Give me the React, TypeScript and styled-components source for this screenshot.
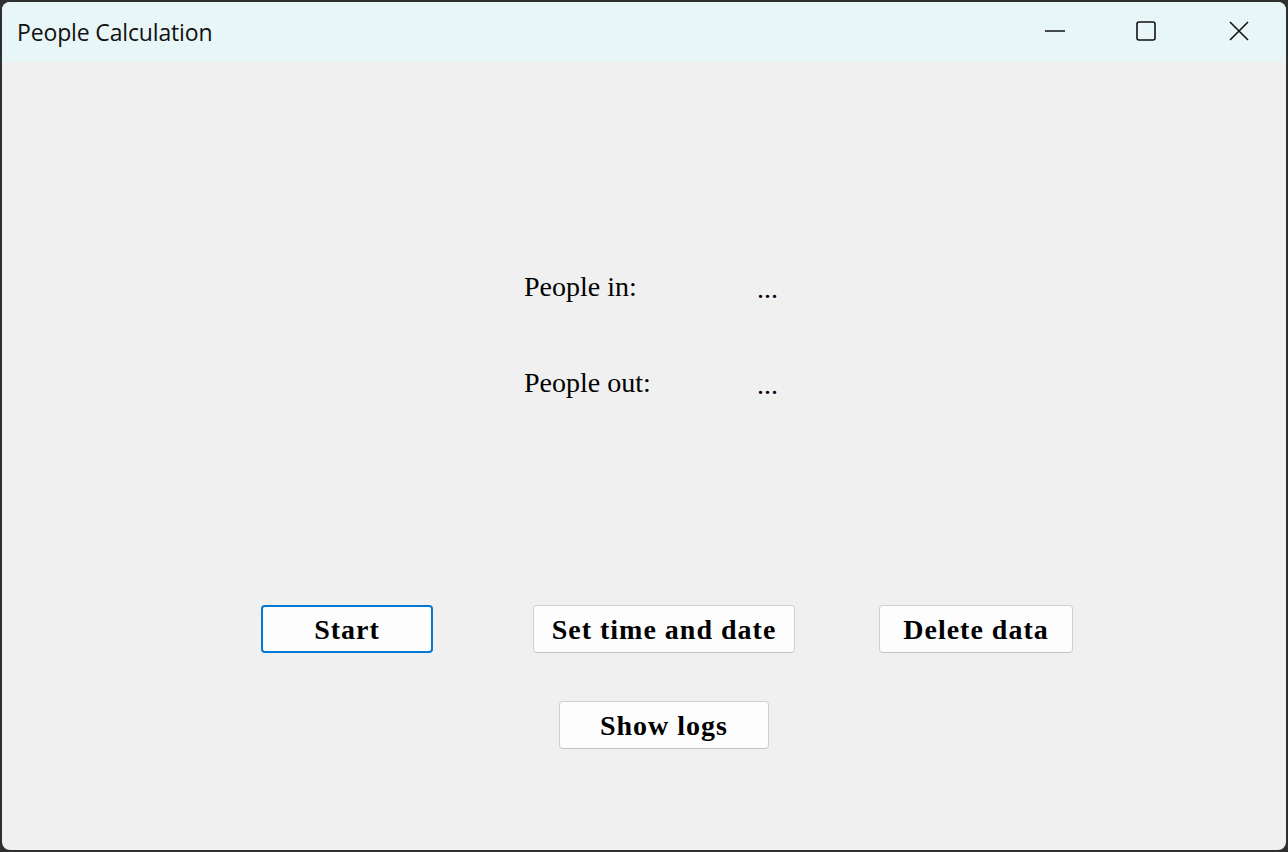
import React from "react";
import styled, { createGlobalStyle } from "styled-components";

const Global = createGlobalStyle`
  html, body { margin: 0; padding: 0; background: #2f2f2f; }
  #root { width: 1288px; height: 852px; }
`;

const Frame = styled.div`
  width: 1288px;
  height: 852px;
  box-sizing: border-box;
  padding: 2px;
  background: #2f2f2f;
`;

const Window = styled.div`
  width: 100%;
  height: 100%;
  border-radius: 8px;
  overflow: hidden;
  background: #f0f0f0;
  display: flex;
  flex-direction: column;
`;

const TitleBar = styled.div`
  height: 60px;
  flex: none;
  background: #e9f6f8;
  display: flex;
  align-items: center;
  padding-left: 15px;
`;

const Title = styled.div`
  font-family: "Open Sans", "Noto Sans", sans-serif;
  font-size: 23px;
  letter-spacing: -0.15px;
  color: #111;
  flex: 1;
`;

const Controls = styled.div`
  display: flex;
  height: 100%;
`;

const ControlButton = styled.div<{ $w: number }>`
  width: ${(p) => p.$w}px;
  height: 100%;
  display: flex;
  align-items: center;
  justify-content: center;
  padding-bottom: 2px;
  box-sizing: border-box;
`;

const Content = styled.div`
  flex: 1;
  display: flex;
  flex-direction: column;
`;

const Readouts = styled.div`
  margin-top: 209px;
  margin-left: 522px;
  display: grid;
  grid-template-columns: 233px auto;
  row-gap: 62px;
  font-family: "Liberation Serif", "Times New Roman", serif;
  font-size: 28px;
  line-height: 32px;
  color: #000;
`;

const Label = styled.div``;

const Value = styled.div`
  margin-top: 2px;
`;

const ButtonRow = styled.div<{ $top: number; $left: number }>`
  display: flex;
  margin-top: ${(p) => p.$top}px;
  padding-left: ${(p) => p.$left}px;
`;

const Button = styled.button<{ $w: number; $gap?: number; $focused?: boolean }>`
  width: ${(p) => p.$w}px;
  height: 48px;
  margin-left: ${(p) => p.$gap ?? 0}px;
  box-sizing: border-box;
  background: #fdfdfd;
  border: ${(p) => (p.$focused ? "2px solid #0078d4" : "1px solid #cfcfcf")};
  border-bottom-color: ${(p) => (p.$focused ? "#0078d4" : "#c2c2c2")};
  border-radius: 4px;
  font-family: "Liberation Serif", "Times New Roman", serif;
  font-weight: bold;
  font-size: 28px;
  letter-spacing: 1px;
  color: #000;
  padding: 2px 0 0 0;
  display: flex;
  align-items: center;
  justify-content: center;
`;

const Icon = ({ kind }: { kind: "min" | "max" | "close" }) => {
  if (kind === "min")
    return (
      <svg width="22" height="22" viewBox="0 0 22 22">
        <line x1="1" y1="11" x2="21" y2="11" stroke="#111" strokeWidth="1.6" />
      </svg>
    );
  if (kind === "max")
    return (
      <svg width="22" height="22" viewBox="0 0 22 22">
        <rect x="2" y="2" width="18" height="18" rx="2" fill="none" stroke="#111" strokeWidth="1.6" />
      </svg>
    );
  return (
    <svg width="22" height="22" viewBox="0 0 22 22">
      <path d="M2 2 L20 20 M20 2 L2 20" stroke="#111" strokeWidth="1.6" fill="none" />
    </svg>
  );
};

export default function App() {
  return (
    <>
      <Global />
      <Frame>
        <Window>
          <TitleBar>
            <Title>People Calculation</Title>
            <Controls>
              <ControlButton $w={91}><Icon kind="min" /></ControlButton>
              <ControlButton $w={91}><Icon kind="max" /></ControlButton>
              <ControlButton $w={95}><Icon kind="close" /></ControlButton>
            </Controls>
          </TitleBar>
          <Content>
            <Readouts>
              <Label>People in:</Label>
              <Value>...</Value>
              <Label>People out:</Label>
              <Value>...</Value>
            </Readouts>
            <ButtonRow $top={204} $left={259}>
              <Button $w={172} $focused>Start</Button>
              <Button $w={262} $gap={100}>Set time and date</Button>
              <Button $w={194} $gap={84}>Delete data</Button>
            </ButtonRow>
            <ButtonRow $top={48} $left={557}>
              <Button $w={210}>Show logs</Button>
            </ButtonRow>
          </Content>
        </Window>
      </Frame>
    </>
  );
}
